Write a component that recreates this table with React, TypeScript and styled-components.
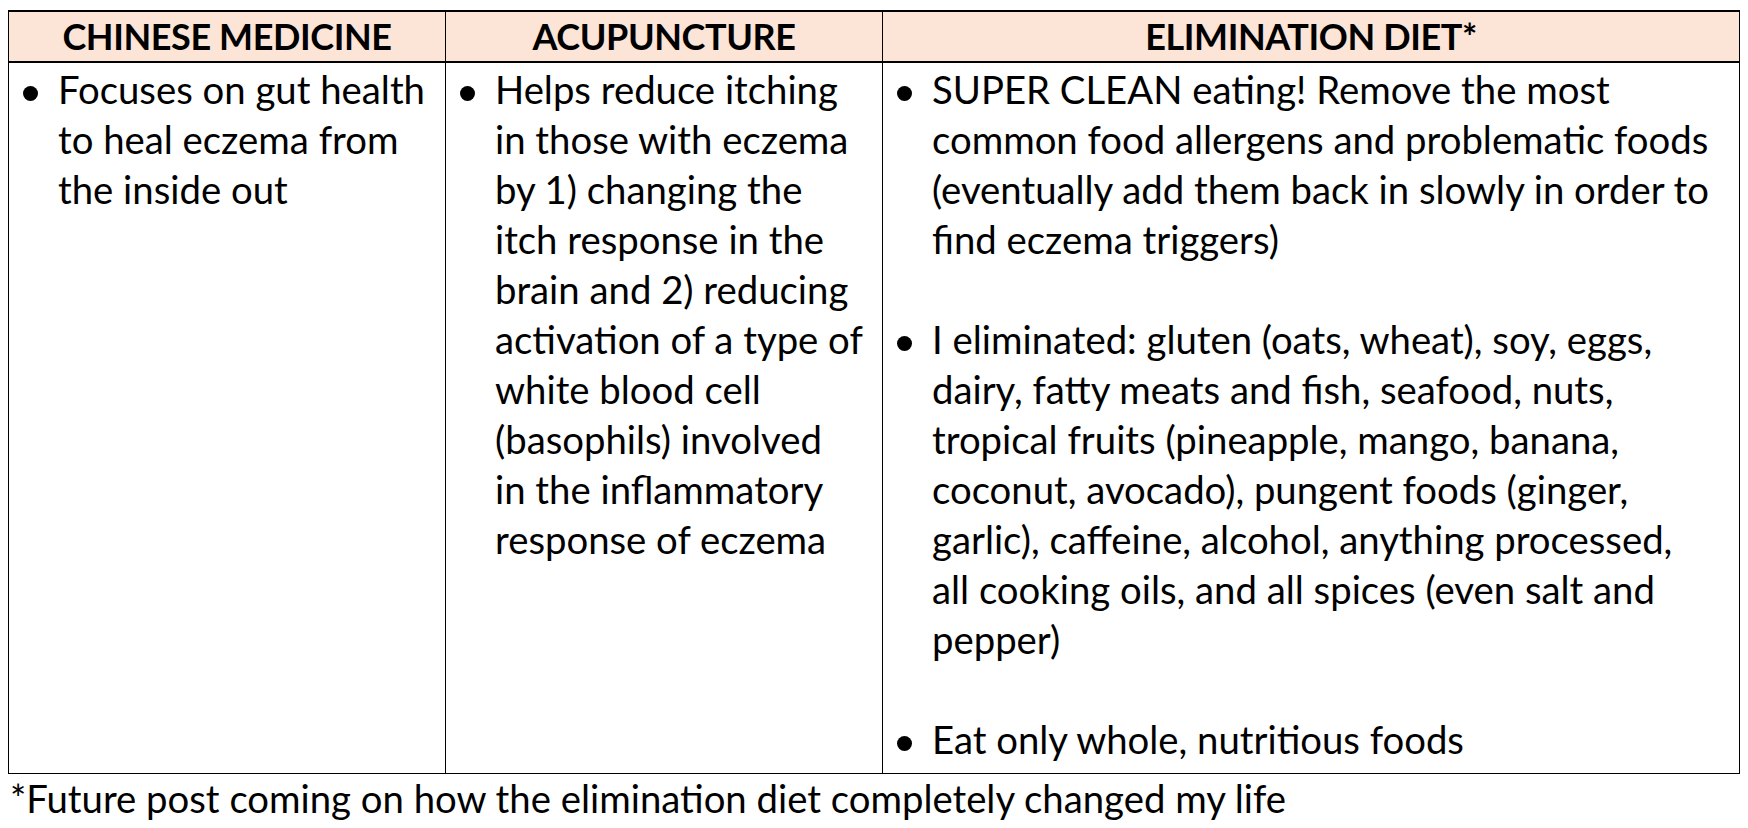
import React from "react";
import styled, { createGlobalStyle } from "styled-components";

const Global = createGlobalStyle`
  html, body {
    margin: 0;
    padding: 0;
    background: #ffffff;
  }
  body {
    font-family: Lato, "Open Sans", "Liberation Sans", sans-serif;
    color: #000000;
  }
`;

const Page = styled.div`
  width: 1748px;
  height: 828px;
  padding: 10px 0 0 8px;
  box-sizing: border-box;
  overflow: hidden;
`;

const Table = styled.div`
  width: 1732px;
  box-sizing: border-box;
  display: grid;
  grid-template-columns: 436px 437px 1fr;
  border: 1px solid #000;
  border-top: 2px solid #000;
`;

const HeadCell = styled.div<{ $first?: boolean }>`
  background: #fce4d6;
  border-left: ${(p) => (p.$first ? "none" : "1px solid #000")};
  border-bottom: 2px solid #000;
  height: 49px;
  line-height: 49px;
  text-align: center;
  font-weight: 700;
  font-size: 36px;
  letter-spacing: -0.4px;
  white-space: nowrap;
`;

const BodyCell = styled.div<{ $first?: boolean }>`
  border-left: ${(p) => (p.$first ? "none" : "1px solid #000")};
  padding: 1px 0 9px 0;
  display: flex;
  flex-direction: column;
  gap: 50px;
`;

const Item = styled.div`
  display: flex;
  align-items: flex-start;
`;

const BulletBox = styled.div`
  flex: 0 0 49px;
  height: 50px;
  position: relative;
`;

const Dot = styled.span`
  position: absolute;
  left: 14px;
  top: 22px;
  width: 15px;
  height: 15px;
  border-radius: 50%;
  background: #000;
`;

const Lines = styled.div`
  display: flex;
  flex-direction: column;
`;

const Line = styled.div`
  height: 50px;
  line-height: 50px;
  font-size: 38.3px;
  white-space: nowrap;
`;

const Footnote = styled.div`
  padding-left: 2px;
  font-size: 38.3px;
  line-height: 48px;
  white-space: nowrap;
`;

const Bullet: React.FC<{ lines: string[] }> = ({ lines }) => (
  <Item>
    <BulletBox>
      <Dot />
    </BulletBox>
    <Lines>
      {lines.map((l, i) => (
        <Line key={i}>{l}</Line>
      ))}
    </Lines>
  </Item>
);

const columns: { title: string; items: string[][] }[] = [
  {
    title: "CHINESE MEDICINE",
    items: [["Focuses on gut health", "to heal eczema from", "the inside out"]],
  },
  {
    title: "ACUPUNCTURE",
    items: [
      [
        "Helps reduce itching",
        "in those with eczema",
        "by 1) changing the",
        "itch response in the",
        "brain and 2) reducing",
        "activation of a type of",
        "white blood cell",
        "(basophils) involved",
        "in the inflammatory",
        "response of eczema",
      ],
    ],
  },
  {
    title: "ELIMINATION DIET*",
    items: [
      [
        "SUPER CLEAN eating! Remove the most",
        "common food allergens and problematic foods",
        "(eventually add them back in slowly in order to",
        "find eczema triggers)",
      ],
      [
        "I eliminated: gluten (oats, wheat), soy, eggs,",
        "dairy, fatty meats and fish, seafood, nuts,",
        "tropical fruits (pineapple, mango, banana,",
        "coconut, avocado), pungent foods (ginger,",
        "garlic), caffeine, alcohol, anything processed,",
        "all cooking oils, and all spices (even salt and",
        "pepper)",
      ],
      ["Eat only whole, nutritious foods"],
    ],
  },
];

export default function App() {
  return (
    <>
      <Global />
      <Page>
        <Table>
          {columns.map((c, i) => (
            <HeadCell key={c.title} $first={i === 0}>
              {c.title}
            </HeadCell>
          ))}
          {columns.map((c, i) => (
            <BodyCell key={c.title + "-body"} $first={i === 0}>
              {c.items.map((lines, j) => (
                <Bullet key={j} lines={lines} />
              ))}
            </BodyCell>
          ))}
        </Table>
        <Footnote>*Future post coming on how the elimination diet completely changed my life</Footnote>
      </Page>
    </>
  );
}
